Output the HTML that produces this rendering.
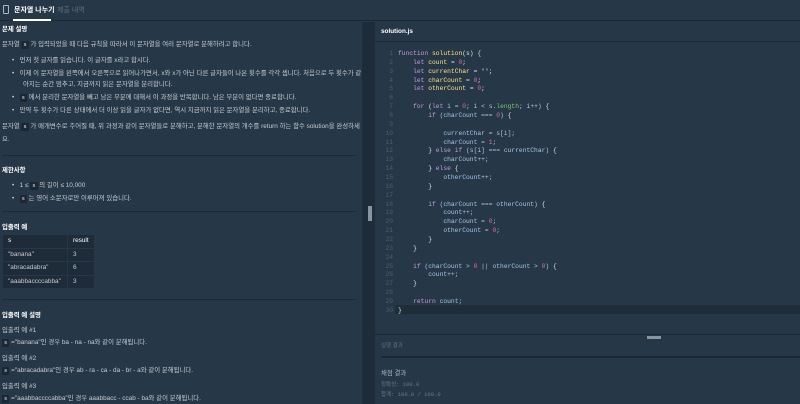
<!DOCTYPE html><html><head><meta charset="utf-8"><style>
*{margin:0;padding:0;box-sizing:border-box}
body{width:800px;height:404px;overflow:hidden;background:#263747;font-family:"Liberation Sans","Noto Sans CJK KR",sans-serif;color:#c7ccd1;position:relative}
.top{position:absolute;left:0;top:0;width:800px;height:21px;background:#263747;border-bottom:1px solid #1b2733}
.tab{position:absolute;top:5px;font-size:7px}
.left{position:absolute;left:0;top:22px;width:362px;height:382px;background:#263747;font-size:6.4px;line-height:8px}
.abs{position:absolute;white-space:nowrap}
h4{position:absolute;font-size:6.4px;color:#fff;font-weight:bold}
.c{display:inline-block;background:#1b2733;color:#dfe3e7;padding:0 2px;border-radius:1px;font-family:"Liberation Mono",monospace;font-size:5.5px}
.hr{position:absolute;left:2px;width:354px;height:1px;background:#1d2a36}
.sep{position:absolute;left:362px;top:22px;width:13px;height:382px;background:#1e2b38}
.right{position:absolute;left:375px;top:22px;width:425px;height:382px;background:#263747}
.code{position:absolute;left:0;top:28px;font-family:"Liberation Mono",monospace;font-size:6.3px;line-height:8.86px;white-space:pre;color:#a4c6e8}
.ln{display:inline-block;width:18px;text-align:right;color:#4b5e70;margin-right:5px}
.k{color:#c79ae3}.v{color:#ffe082}.f{color:#ffe082}.n{color:#e06c9f}.p{color:#dfe3e7}.g{color:#7ec77a}
table{position:absolute;left:2px;top:210px;border-collapse:collapse;font-size:6.4px;background:#1e2b38}
td{border:1px solid #263747;padding:0 5px;height:13.5px}
</style></head><body>
<div class="top">
<div style="position:absolute;left:3px;top:5px;width:6px;height:9px;border:1px solid #aeb6be;border-radius:1px"></div>
<div class="tab" style="left:14px;color:#fff;font-weight:bold">문자열 나누기</div>
<div style="position:absolute;left:13px;top:19px;width:38px;height:2px;background:#fff"></div>
<div class="tab" style="left:57px;color:#5f7080">제출 내역</div>
</div>
<div class="left">
<h4 style="left:2px;top:4px">문제 설명</h4>
<div class="abs" style="left:2px;top:19px">문자열 <span class="c">s</span> 가 입력되었을 때 다음 규칙을 따라서 이 문자열을 여러 문자열로 분해하려고 합니다.</div>
<div class="abs" style="left:12px;top:35px">•&nbsp;&nbsp; 먼저 첫 글자를 읽습니다. 이 글자를 x라고 합시다.</div>
<div class="abs" style="left:12px;top:48px">•&nbsp;&nbsp; 이제 이 문자열을 왼쪽에서 오른쪽으로 읽어나가면서, x와 x가 아닌 다른 글자들이 나온 횟수를 각각 셉니다. 처음으로 두 횟수가 같</div>
<div class="abs" style="left:23px;top:59px">아지는 순간 멈추고, 지금까지 읽은 문자열을 분리합니다.</div>
<div class="abs" style="left:12px;top:72px">•&nbsp;&nbsp; <span class="c">s</span> 에서 분리한 문자열을 빼고 남은 부분에 대해서 이 과정을 반복합니다. 남은 부분이 없다면 종료합니다.</div>
<div class="abs" style="left:12px;top:85px">•&nbsp;&nbsp; 만약 두 횟수가 다른 상태에서 더 이상 읽을 글자가 없다면, 역시 지금까지 읽은 문자열을 분리하고, 종료합니다.</div>
<div class="abs" style="left:2px;top:101px">문자열 <span class="c">s</span> 가 매개변수로 주어질 때, 위 과정과 같이 문자열들로 분해하고, 분해한 문자열의 개수를 return 하는 함수 solution을 완성하세</div>
<div class="abs" style="left:2px;top:114px">요.</div>
<div class="hr" style="top:133px"></div>
<h4 style="left:2px;top:145px">제한사항</h4>
<div class="abs" style="left:12px;top:160px">•&nbsp;&nbsp; 1 ≤ <span class="c">s</span> 의 길이 ≤ 10,000</div>
<div class="abs" style="left:12px;top:173px">•&nbsp;&nbsp; <span class="c">s</span> 는 영어 소문자로만 이루어져 있습니다.</div>
<div class="hr" style="top:189px"></div>
<h4 style="left:2px;top:202px">입출력 예</h4>
<table style="top:212px"><tr><td style="width:65px;color:#fff">s</td><td style="width:27px;color:#fff">result</td></tr>
<tr><td>"banana"</td><td>3</td></tr><tr><td>"abracadabra"</td><td>6</td></tr><tr><td>"aaabbaccccabba"</td><td>3</td></tr></table>
<div class="hr" style="top:277px"></div>
<h4 style="left:2px;top:290px">입출력 예 설명</h4>
<div class="abs" style="left:2px;top:305px">입출력 예 #1</div>
<div class="abs" style="left:2px;top:317px"><span class="c">s</span> ="banana"인 경우 ba - na - na와 같이 분해됩니다.</div>
<div class="abs" style="left:2px;top:333px">입출력 예 #2</div>
<div class="abs" style="left:2px;top:345px"><span class="c">s</span> ="abracadabra"인 경우 ab - ra - ca - da - br - a와 같이 분해됩니다.</div>
<div class="abs" style="left:2px;top:361px">입출력 예 #3</div>
<div class="abs" style="left:2px;top:373px"><span class="c">s</span> ="aaabbaccccabba"인 경우 aaabbacc - ccab - ba와 같이 분해됩니다.</div>
</div>
<div class="sep"><div style="position:absolute;left:6px;top:184px;width:4px;height:15px;background:#8a949e"></div></div>
<div class="right">
<div style="position:absolute;left:0;top:0;width:425px;height:20px;border-bottom:1px solid #1d2a36"></div>
<div class="abs" style="left:6px;top:6px;font-size:6.4px;color:#fff;font-weight:bold">solution.js</div>
<div style="position:absolute;left:20px;top:283px;width:405px;height:9px;background:#1f2d3a"></div>
<div class="code"><span class="ln">1</span><span class="k">function</span> <span class="f">solution</span><span class="p">(s) {</span>
<span class="ln">2</span>    <span class="k">let</span> <span class="v">count</span> <span class="p">=</span> <span class="n">0</span><span class="p">;</span>
<span class="ln">3</span>    <span class="k">let</span> <span class="v">currentChar</span> <span class="p">=</span> <span class="g">""</span><span class="p">;</span>
<span class="ln">4</span>    <span class="k">let</span> <span class="v">charCount</span> <span class="p">=</span> <span class="n">0</span><span class="p">;</span>
<span class="ln">5</span>    <span class="k">let</span> <span class="v">otherCount</span> <span class="p">=</span> <span class="n">0</span><span class="p">;</span>
<span class="ln">6</span>
<span class="ln">7</span>    <span class="k">for</span> <span class="p">(</span><span class="k">let</span> i = <span class="n">0</span>; i &lt; s.<span class="g">length</span>; i++) <span class="p">{</span>
<span class="ln">8</span>        <span class="k">if</span> (charCount === <span class="n">0</span>) <span class="p">{</span>
<span class="ln">9</span>
<span class="ln">10</span>            currentChar = s[i];
<span class="ln">11</span>            charCount = <span class="n">1</span>;
<span class="ln">12</span>        <span class="p">}</span> <span class="k">else if</span> (s[i] === currentChar) <span class="p">{</span>
<span class="ln">13</span>            charCount++;
<span class="ln">14</span>        <span class="p">}</span> <span class="k">else</span> <span class="p">{</span>
<span class="ln">15</span>            otherCount++;
<span class="ln">16</span>        <span class="p">}</span>
<span class="ln">17</span>
<span class="ln">18</span>        <span class="k">if</span> (charCount === otherCount) <span class="p">{</span>
<span class="ln">19</span>            count++;
<span class="ln">20</span>            charCount = <span class="n">0</span>;
<span class="ln">21</span>            otherCount = <span class="n">0</span>;
<span class="ln">22</span>        <span class="p">}</span>
<span class="ln">23</span>    <span class="p">}</span>
<span class="ln">24</span>
<span class="ln">25</span>    <span class="k">if</span> (charCount &gt; <span class="n">0</span> || otherCount &gt; <span class="n">0</span>) <span class="p">{</span>
<span class="ln">26</span>        count++;
<span class="ln">27</span>    <span class="p">}</span>
<span class="ln">28</span>
<span class="ln">29</span>    <span class="k">return</span> count;
<span class="ln">30</span><span class="p">}</span></div>
<div style="position:absolute;left:0;top:312px;width:425px;height:1px;background:#1b2733"></div>
<div style="position:absolute;left:272px;top:314px;width:14px;height:3px;background:#8a949e"></div>
<div class="abs" style="left:6px;top:319px;font-size:5.5px;color:#5f7080">실행 결과</div>
<div style="position:absolute;left:6px;top:334px;width:419px;height:2px;background:#1b2733"></div>
<div class="abs" style="left:6px;top:346px;font-size:6.4px;color:#aeb6be">채점 결과</div>
<div class="abs" style="left:6px;top:358px;font-size:5.5px;color:#6b7a89;font-family:'Liberation Mono','Noto Sans CJK KR',monospace">정확성: 100.0</div>
<div class="abs" style="left:6px;top:368px;font-size:5.5px;color:#6b7a89;font-family:'Liberation Mono','Noto Sans CJK KR',monospace">합계: 100.0 / 100.0</div>
</div>
</body></html>
